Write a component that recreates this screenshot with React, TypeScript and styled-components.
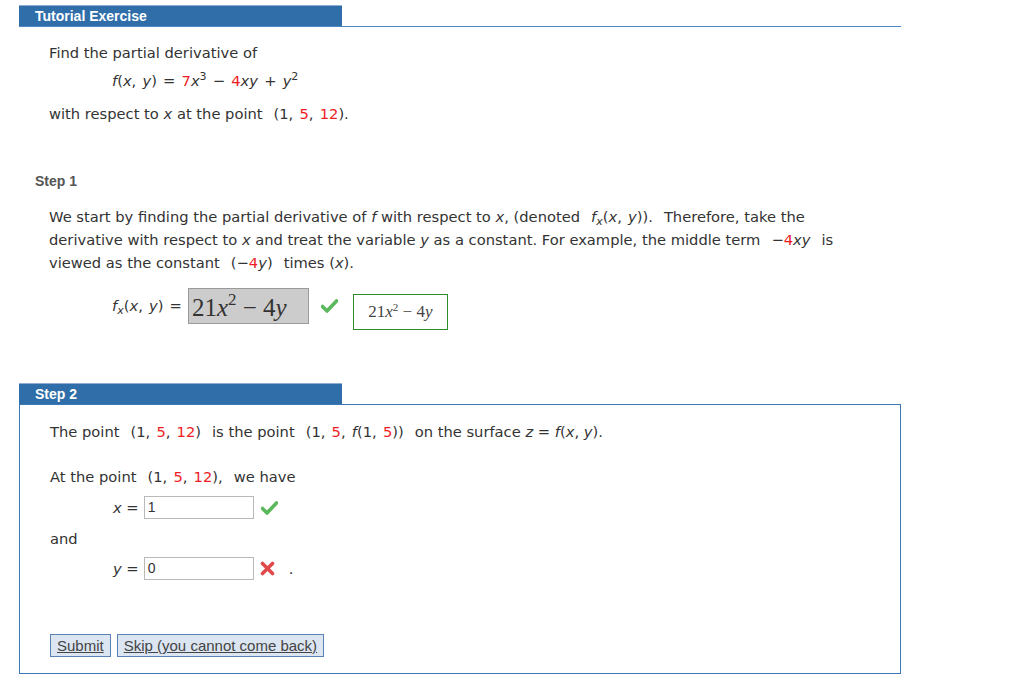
import React from 'react';
import styled, { createGlobalStyle } from 'styled-components';

const GlobalStyle = createGlobalStyle`
  html, body {
    margin: 0;
    padding: 0;
    background: #ffffff;
  }
  body {
    font-family: "DejaVu Sans", Verdana, sans-serif;
    font-size: 14.7px;
    color: #333333;
  }
`;

const Page = styled.div`
  width: 882px;
  margin-left: 19px;
  padding-top: 5px;
`;

const HeaderBar = styled.div<{ $line?: boolean }>`
  border-bottom: ${(p) => (p.$line ? '1px solid #4d86c0' : 'none')};
`;

const HeaderTab = styled.div`
  width: 307px;
  height: 20px;
  line-height: 21px;
  padding-left: 16px;
  background: #2f6ea9;
  border-top: 1px solid #8fb0d4;
  color: #ffffff;
  font-family: "Liberation Sans", Arial, sans-serif;
  font-weight: bold;
  font-size: 14px;
`;

const Section = styled.div`
  padding-left: 30px;
`;

const Line = styled.div<{ $top: number; $indent?: number }>`
  margin-top: ${(p) => p.$top}px;
  padding-left: ${(p) => p.$indent ?? 0}px;
  line-height: 23px;
  white-space: nowrap;
`;

const Para = styled.div`
  margin-top: 16px;
  line-height: 23px;
  white-space: nowrap;
`;

const Red = styled.span`
  color: #ee1c24;
`;

const M = styled.span`
  word-spacing: 1.5px;
`;

const V = styled.i``;

const Sup = styled.sup`
  font-size: 11px;
  vertical-align: 6px;
  line-height: 0;
`;

const Sub = styled.sub`
  font-size: 11px;
  vertical-align: -3px;
  line-height: 0;
`;

const Gap = styled.span`
  display: inline-block;
  width: 11px;
`;

const StepLabel = styled.div<{ $top: number }>`
  margin-top: ${(p) => p.$top}px;
  padding-left: 16px;
  font-family: "Liberation Sans", Arial, sans-serif;
  font-weight: bold;
  font-size: 14px;
  color: #555555;
`;

const AnswerRow = styled.div`
  display: flex;
  align-items: center;
  margin-top: 14px;
  padding-left: 63px;
  height: 35px;
`;

const Label = styled.span`
  margin-right: 6px;
`;

const MathBox = styled.div`
  box-sizing: border-box;
  width: 121px;
  height: 36px;
  padding: 5px 0 0 3px;
  background: #cccccc;
  border: 1px solid #9a9a9a;
  font-family: "Liberation Serif", "Times New Roman", serif;
  font-size: 25px;
  line-height: 28px;
  color: #333333;
  white-space: nowrap;
`;

const MathSup = styled.sup`
  font-size: 17px;
  vertical-align: 11px;
  line-height: 0;
`;

const CorrectBox = styled.div`
  box-sizing: border-box;
  width: 95px;
  height: 36px;
  margin-left: 15px;
  margin-top: 12px;
  padding-top: 6px;
  text-align: center;
  border: 1px solid #2e8b2e;
  font-family: "Liberation Serif", "Times New Roman", serif;
  font-size: 17px;
  line-height: 22px;
  color: #444444;
  white-space: nowrap;
`;

const SmallSup = styled.sup`
  font-size: 11px;
  vertical-align: 6px;
  line-height: 0;
`;

const Icon = styled.span<{ $ml: number }>`
  display: inline-flex;
  margin-left: ${(p) => p.$ml}px;
`;

const Step2Box = styled.div`
  box-sizing: border-box;
  height: 270px;
  border: 1px solid #3b78b8;
  padding-left: 30px;
  padding-top: 15px;
`;

const InputRow = styled.div<{ $top: number }>`
  display: flex;
  align-items: center;
  margin-top: ${(p) => p.$top}px;
  padding-left: 63px;
  height: 23px;
`;

const TextInput = styled.div`
  box-sizing: border-box;
  width: 110px;
  height: 23px;
  margin-left: 5px;
  padding-left: 3px;
  border: 1px solid #b9b9b9;
  line-height: 20px;
  font-family: "Liberation Sans", Arial, sans-serif;
  font-size: 14px;
  color: #333333;
`;

const Period = styled.span`
  margin-left: 14px;
`;

const Buttons = styled.div`
  display: flex;
  gap: 6px;
  margin-top: 54px;
`;

const Button = styled.button`
  box-sizing: border-box;
  height: 23px;
  padding: 0 6px;
  background: #dbe6f2;
  border: 1px solid #5a83b4;
  font-family: "Liberation Sans", Arial, sans-serif;
  font-size: 15px;
  color: #444444;
  text-decoration: underline;
  cursor: pointer;
`;

function Check() {
  return (
    <svg width="17" height="14" viewBox="0 0 17 14">
      <path d="M1.5 7.5 L6 12 L15.5 2" fill="none" stroke="#5cb85c" strokeWidth="3.6" strokeLinecap="round" strokeLinejoin="round" />
    </svg>
  );
}

function Cross() {
  return (
    <svg width="15" height="15" viewBox="0 0 15 15">
      <path d="M2.5 2.5 L12.5 12.5 M12.5 2.5 L2.5 12.5" fill="none" stroke="#e0494b" strokeWidth="3.6" strokeLinecap="round" />
    </svg>
  );
}

export default function App() {
  return (
    <>
      <GlobalStyle />
      <Page>
        <HeaderBar $line>
          <HeaderTab>Tutorial Exercise</HeaderTab>
        </HeaderBar>
        <Section>
          <Line $top={14}>Find the partial derivative of</Line>
          <Line $top={5} $indent={63}>
            <M>
              <V>f</V>(<V>x</V>, <V>y</V>) = <Red>7</Red><V>x</V><Sup>3</Sup> − <Red>4</Red><V>xy</V> + <V>y</V>
              <Sup>2</Sup>
            </M>
          </Line>
          <Line $top={10}>
            with respect to <V>x</V> at the point<Gap />
            <M>
              (1, <Red>5</Red>, <Red>12</Red>)
            </M>
            .
          </Line>
        </Section>
        <StepLabel $top={48}>Step 1</StepLabel>
        <Section>
          <Para>
            We start by finding the partial derivative of <V>f</V> with respect to <V>x</V>, (denoted<Gap />
            <M>
              <V>f</V>
              <Sub><V>x</V></Sub>(<V>x</V>, <V>y</V>)
            </M>
            ).<Gap />Therefore, take the
            <br />
            derivative with respect to <V>x</V> and treat the variable <V>y</V> as a constant. For example, the middle term
            <Gap />−<Red>4</Red><V>xy</V><Gap />is
            <br />
            viewed as the constant<Gap />(−<Red>4</Red><V>y</V>)<Gap />times (<V>x</V>).
          </Para>
          <AnswerRow>
            <Label>
              <M>
                <V>f</V>
                <Sub><V>x</V></Sub>(<V>x</V>, <V>y</V>) =
              </M>
            </Label>
            <MathBox>
              21<V>x</V>
              <MathSup>2</MathSup>&nbsp;− 4<V>y</V>
            </MathBox>
            <Icon $ml={12}>
              <Check />
            </Icon>
            <CorrectBox>
              21<V>x</V>
              <SmallSup>2</SmallSup>&nbsp;− 4<V>y</V>
            </CorrectBox>
          </AnswerRow>
        </Section>
        <HeaderBar style={{ marginTop: 60 }}>
          <HeaderTab>Step 2</HeaderTab>
        </HeaderBar>
        <Step2Box>
          <Line $top={0}>
            The point<Gap />
            <M>
              (1, <Red>5</Red>, <Red>12</Red>)
            </M>
            <Gap />
            is the point<Gap />
            <M>
              (1, <Red>5</Red>, <V>f</V>(1, <Red>5</Red>))
            </M>
            <Gap />
            on the surface <V>z</V> = <V>f</V>(<V>x</V>, <V>y</V>).
          </Line>
          <Line $top={22}>
            At the point<Gap />
            <M>
              (1, <Red>5</Red>, <Red>12</Red>)
            </M>
            ,<Gap />
            we have
          </Line>
          <InputRow $top={8}>
            <V>x</V>&nbsp;=
            <TextInput>1</TextInput>
            <Icon $ml={7}>
              <Check />
            </Icon>
          </InputRow>
          <Line $top={8}>and</Line>
          <InputRow $top={7}>
            <V>y</V>&nbsp;=
            <TextInput>0</TextInput>
            <Icon $ml={6}>
              <Cross />
            </Icon>
            <Period>.</Period>
          </InputRow>
          <Buttons>
            <Button>Submit</Button>
            <Button>Skip (you cannot come back)</Button>
          </Buttons>
        </Step2Box>
      </Page>
    </>
  );
}
